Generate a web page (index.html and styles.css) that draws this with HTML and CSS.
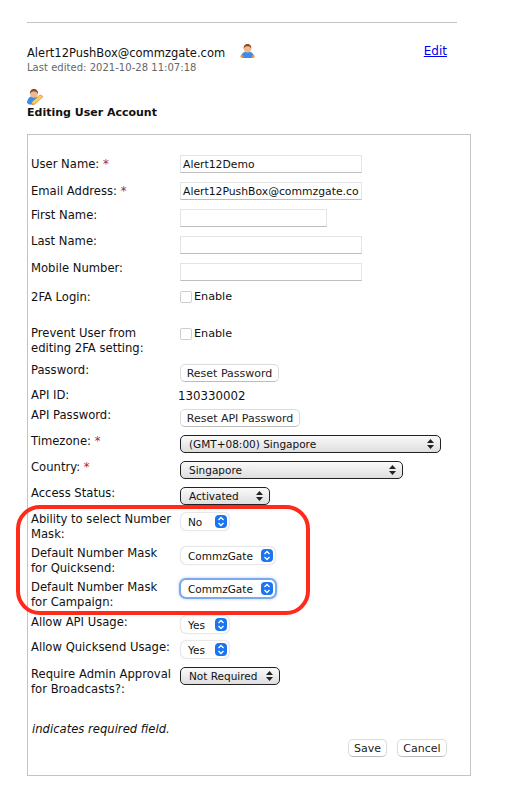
FILE: index.html
```html
<!DOCTYPE html>
<html lang="en">
<head>
    <meta charset="UTF-8">
    <title>Editing User Account</title>
    <link rel="stylesheet" href="styles.css">
</head>
<body>

<div class="page">
    <hr class="rule">

    <div class="account">
        <div class="account-name">
            <span>Alert12PushBox@commzgate.com</span>
            <svg class="user-icon" width="15" height="15" viewBox="0 0 16 16">
                <path d="M1 14c0-3 2-5 4-5.500h6c2 .5 4 2.500 4 5.500l-2 1H3z" fill="#3a8ee8"/>
                <path d="M0 13l2-2 2 3-2 1zM16 13l-2-2-2 3 2 1z" fill="#e89a4a"/>
                <circle cx="8" cy="5" r="4" fill="#eeb98c"/>
                <path d="M4 5c-.5-3 1.500-5 4-5s4.500 2 4 5c-1-2-2-2.500-4-2.500S5 3 4 5z" fill="#8a4a24"/>
            </svg>
        </div>
        <a class="edit-link" href="#">Edit</a>
    </div>
    <div class="last-edited">Last edited: 2021-10-28 11:07:18</div>

    <svg class="edit-icon" width="17" height="16" viewBox="0 0 17 16">
        <path d="M0 14c0-3 2-6 4-6.500h5c2 .5 2 3 1 5l-3 3H2z" fill="#3a8ee8"/>
        <circle cx="7" cy="5" r="3.800" fill="#eeb98c"/>
        <path d="M3 5c-.5-3 1.500-5 4-5s4.500 2 4 5c-1-2-2-2.500-4-2.500S4 3 3 5z" fill="#8a4a24"/>
        <path d="M5 13l8-7 3 1.500-8 7.500-3 .5z" fill="#f2cf6b" stroke="#d98f3a" stroke-width=".8"/>
    </svg>
    <h1 class="title">Editing User Account</h1>

    <form class="panel">
        <div class="fields">
            <label class="label label-low">User Name: <em>*</em></label>
            <input class="text wide" type="text" value="Alert12Demo">

            <label class="label label-low">Email Address: <em>*</em></label>
            <input class="text wide" type="text" value="Alert12PushBox@commzgate.com">

            <label class="label">First Name:</label>
            <input class="text short" type="text">

            <label class="label label-up">Last Name:</label>
            <input class="text wide" type="text">

            <label class="label label-up">Mobile Number:</label>
            <input class="text wide" type="text">

            <label class="label label-down">2FA Login:</label>
            <div class="check"><span class="box"></span>Enable</div>

            <label class="label">Prevent User from editing 2FA setting:</label>
            <div class="check"><span class="box"></span>Enable</div>

            <label class="label">Password:</label>
            <div><button class="btn reset" type="button">Reset Password</button></div>

            <label class="label label-id">API ID:</label>
            <div class="value">130330002</div>

            <label class="label label-down">API Password:</label>
            <div><button class="btn reset-api" type="button">Reset API Password</button></div>

            <label class="label">Timezone: <em>*</em></label>
            <div class="select dark timezone">(GMT+08:00) Singapore<svg class="arrows" width="7" height="10" viewBox="0 0 7 10"><path d="M3.500 0L7 4H0zM3.500 10L0 6h7z" fill="#222"/></svg></div>

            <label class="label">Country: <em>*</em></label>
            <div class="select dark country">Singapore<svg class="arrows" width="7" height="10" viewBox="0 0 7 10"><path d="M3.500 0L7 4H0zM3.500 10L0 6h7z" fill="#222"/></svg></div>

            <label class="label">Access Status:</label>
            <div class="select dark access">Activated<svg class="arrows" width="7" height="10" viewBox="0 0 7 10"><path d="M3.500 0L7 4H0zM3.500 10L0 6h7z" fill="#222"/></svg></div>

            <label class="label label-up">Ability to select Number Mask:</label>
            <div class="select blue small">No<span class="badge"><svg width="8" height="11" viewBox="0 0 8 11"><path d="M1.500 4L4 1.500 6.500 4M1.500 7L4 9.500 6.500 7" fill="none" stroke="#fff" stroke-width="1.300"/></svg></span></div>

            <label class="label label-up">Default Number Mask for Quicksend:</label>
            <div class="select blue mask">CommzGate<span class="badge"><svg width="8" height="11" viewBox="0 0 8 11"><path d="M1.500 4L4 1.500 6.500 4M1.500 7L4 9.500 6.500 7" fill="none" stroke="#fff" stroke-width="1.300"/></svg></span></div>

            <label class="label label-down">Default Number Mask for Campaign:</label>
            <div class="select blue mask focused">CommzGate<span class="badge"><svg width="8" height="11" viewBox="0 0 8 11"><path d="M1.500 4L4 1.500 6.500 4M1.500 7L4 9.500 6.500 7" fill="none" stroke="#fff" stroke-width="1.300"/></svg></span></div>

            <label class="label label-up">Allow API Usage:</label>
            <div class="select blue small">Yes<span class="badge"><svg width="8" height="11" viewBox="0 0 8 11"><path d="M1.500 4L4 1.500 6.500 4M1.500 7L4 9.500 6.500 7" fill="none" stroke="#fff" stroke-width="1.300"/></svg></span></div>

            <label class="label label-up">Allow Quicksend Usage:</label>
            <div class="select blue small">Yes<span class="badge"><svg width="8" height="11" viewBox="0 0 8 11"><path d="M1.500 4L4 1.500 6.500 4M1.500 7L4 9.500 6.500 7" fill="none" stroke="#fff" stroke-width="1.300"/></svg></span></div>

            <label class="label label-down">Require Admin Approval for Broadcasts?:</label>
            <div class="select dark approval">Not Required<svg class="arrows" width="7" height="10" viewBox="0 0 7 10"><path d="M3.500 0L7 4H0zM3.500 10L0 6h7z" fill="#222"/></svg></div>
        </div>

        <p class="note">indicates required field.</p>

        <div class="actions">
            <button class="btn save" type="button">Save</button>
            <button class="btn cancel" type="button">Cancel</button>
        </div>
    </form>

    <!-- Red annotation drawn over the number mask rows -->
    <div class="callout"></div>
</div>

</body>
</html>
```

FILE: styles.css
```css
body {
    margin: 0;
    background-color: #ffffff;
    font-family: "DejaVu Sans", Verdana, sans-serif;
    font-size: 11.5px;
    color: #111111;
}

.page {
    position: relative;
    padding: 22px 0 0 27px;
    height: 771px;
    overflow: hidden;
}

.rule {
    width: 430px;
    height: 1px;
    margin: 0;
    border: none;
    background-color: #c4c4c4;
}

.account {
    display: flex;
    justify-content: space-between;
    width: 420px;
    margin-top: 20px;
    height: 18px;
}

.account-name {
    display: flex;
    align-items: flex-start;
    padding-top: 3px;
}

.user-icon {
    margin: -2px 0 0 15px;
}

.edit-link {
    padding-top: 1px;
    font-size: 12px;
    color: #0000ee;
}

.last-edited {
    margin-top: 0;
    font-size: 10px;
    letter-spacing: 0.03px;
    line-height: 14px;
    color: #666666;
}

.edit-icon {
    display: block;
    margin-top: 14px;
}

.title {
    margin: 0;
    font-size: 11px;
    line-height: 15px;
    color: #111111;
}

.panel {
    width: 442px;
    height: 623px;
    margin-top: 14px;
    padding-top: 17px;
    border: 1px solid #c4c4c4;
}

.fields {
    display: grid;
    grid-template-columns: 149px 1fr;
    grid-template-rows: 27px 27px 27px 27px 27px 37px 37px 23px 21px 27px 26px 26px 27px 34px 32px 37px 25px 25px 58px;
    margin-left: 3px;
}

.label {
    width: 142px;
    margin-top: 2px;
    font-size: 11.6px;
    line-height: 15px;
}

.label-low {
    margin-top: 5px;
}

.label-up {
    margin-top: 1px;
}

.label-down {
    margin-top: 3px;
}

.label-id {
    margin-top: 4px;
}

.label em {
    font-style: normal;
    color: #b02a2a;
}

.text {
    box-sizing: border-box;
    height: 18px;
    margin: 3px 0 0;
    padding: 0 2px;
    border: 1px solid #e4e4e4;
    border-bottom-color: #bdbdbd;
    font-family: inherit;
    font-size: 10.8px;
    color: #111111;
    outline: none;
}

.wide {
    width: 182px;
}

.short {
    width: 147px;
}

.check {
    display: flex;
    align-items: center;
    gap: 2px;
    height: 13px;
    margin-top: 3px;
    font-size: 11.2px;
}

.box {
    width: 10px;
    height: 10px;
    border: 1px solid #cfcfcf;
    border-radius: 2px;
}

.value {
    margin: 5px 0 0 -2px;
    font-size: 11.8px;
    line-height: 15px;
}

.btn {
    box-sizing: border-box;
    height: 18px;
    padding: 0;
    background-color: #ffffff;
    border: 1px solid #dcdcdc;
    border-bottom-color: #bbbbbb;
    border-radius: 5px;
    font-family: inherit;
    font-size: 11px;
    color: #222222;
    margin-top: 3px;
}

.reset {
    width: 99px;
}

.reset-api {
    width: 120px;
    margin-top: 4px;
}

.select {
    position: relative;
    box-sizing: border-box;
    display: flex;
    align-items: center;
    padding-left: 8px;
    margin-top: 3px;
    font-size: 10.5px;
}

.dark {
    height: 18px;
    border: 1px solid #222222;
    border-radius: 5px;
    background: linear-gradient(#fafafa, #dedede);
}

.arrows {
    position: absolute;
    right: 6px;
    top: 3px;
}

.timezone {
    width: 261px;
}

.country {
    width: 223px;
}

.access {
    width: 90px;
}

.approval {
    width: 100px;
}

.blue {
    height: 17px;
    margin-top: 2px;
    margin-left: 1px;
    background-color: #ffffff;
    border-radius: 5px;
    box-shadow: 0 0 2px rgba(0, 0, 0, 0.35);
}

.badge {
    position: absolute;
    right: 2px;
    top: 2px;
    display: flex;
    align-items: center;
    justify-content: center;
    width: 12px;
    height: 13px;
    border-radius: 4px;
    background-color: #1b74f2;
}

.small {
    width: 48px;
    padding-left: 7px;
}

.mask {
    width: 94px;
    padding-left: 7px;
}

.focused {
    margin-top: 3px;
    box-shadow: 0 0 0 2px #7ea8ee, 0 0 3px 2px #a9c5f3;
}

.note {
    margin: 0 0 0 4px;
    font-size: 11.6px;
    font-style: italic;
    line-height: 14px;
}

.actions {
    display: flex;
    justify-content: flex-end;
    gap: 10px;
    width: 419px;
}

.save {
    width: 39px;
}

.cancel {
    width: 50px;
}

.callout {
    position: absolute;
    left: 16px;
    top: 505px;
    width: 286px;
    height: 102px;
    border: 4px solid #ff2a1a;
    border-radius: 24px;
}
```
